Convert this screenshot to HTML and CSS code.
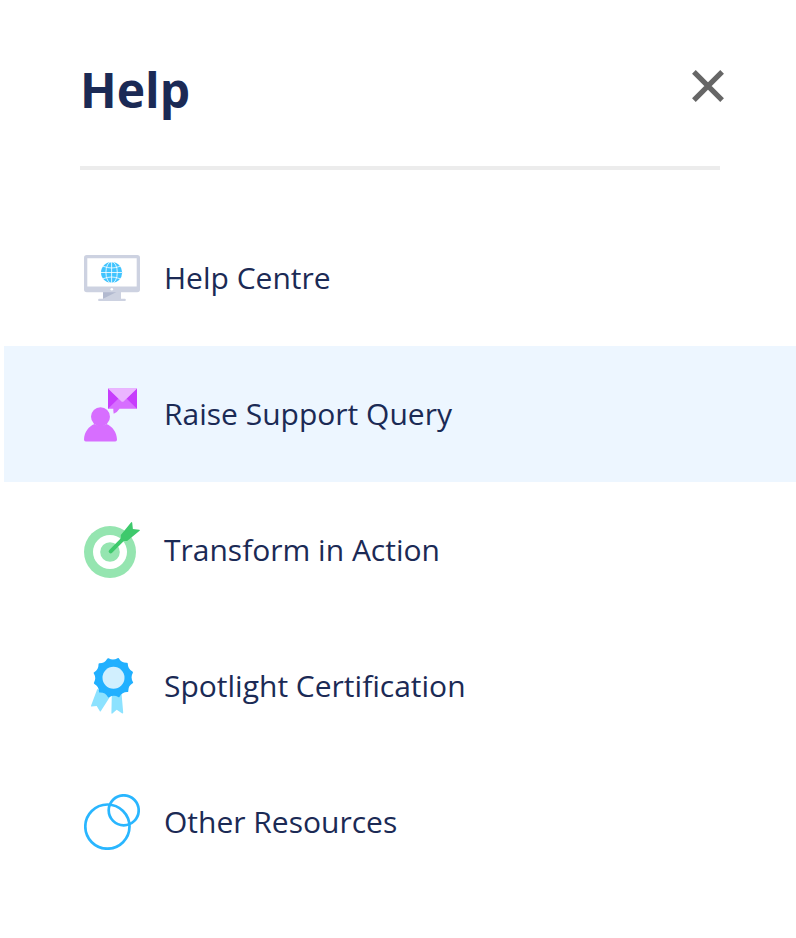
FILE: index.html
```
<!DOCTYPE html>
<html lang="en">
<head>
    <meta charset="utf-8">
    <title>Help</title>
    <link rel="stylesheet" href="styles.css">
</head>
<body>
    <aside class="help-panel">
        <header class="help-header">
            <h1>Help</h1>
            <button type="button" class="close-button" aria-label="Close">
                <svg viewBox="0 0 32 32" width="32" height="32">
                    <path fill="none" stroke="#666" stroke-width="5.200" d="M1.900 1.900 30.100 30.100M30.100 1.900 1.900 30.100"/>
                </svg>
            </button>
        </header>

        <nav class="help-menu">
            <a class="menu-item">
                <svg class="icon" viewBox="0 0 56 56">
                    <path fill="#cdd2e1" d="M19 41h18v8H19z"/>
                    <path fill="#b2b9cf" d="M19 42h13.500l-13.500 6.700z"/>
                    <path fill="#cdd2e1" d="M15 48.700h26q.6 0 .6.600v1.700H14.300v-1.700q0-.6.700-.6z"/>
                    <rect fill="#cdd2e1" y="5" width="56" height="37.300" rx="2.800"/>
                    <path fill="#fff" d="M3.300 8.200h49.400v28.200H3.300z"/>
                    <circle fill="#fff" cx="27.800" cy="39.300" r="1.300"/>
                    <circle fill="#40c4ff" cx="27.600" cy="22.500" r="10.600"/>
                    <g fill="none" stroke="#fff" stroke-width=".8">
                        <ellipse cx="27.600" cy="22.500" rx="5.700" ry="10.800"/>
                        <path d="M27.600 12v21M17 22.500h21.200M19 16.200q8.600 3.600 17.200 0M19 28.800q8.600-3.600 17.200 0"/>
                    </g>
                </svg>
                <span>Help Centre</span>
            </a>
            <a class="menu-item active">
                <svg class="icon" viewBox="0 0 56 56">
                    <circle fill="#d76eff" cx="16.500" cy="30.700" r="9.500"/>
                    <path fill="#d76eff" d="M0 53.500C.3 46 4.500 40.500 10.500 38q6 4 12 0C28.500 40.500 32.700 46 33 53.500q0 2-1.800 2H1.800Q0 55.500 0 53.500z"/>
                    <path fill="#d76eff" d="M24 2.500h29v20.300H35.500q-2 3.500-5.800 4.900-.5-2.200-.4-4.900H24z"/>
                    <path fill="#c73dfc" d="M24 2.500 34.500 12.500 24 22.800zM53 2.500 42.500 12.500 53 22.800z"/>
                    <path fill="#ebb5ff" d="M24 2.500h29L39.800 15.200q-1.300 1.100-2.600 0z"/>
                </svg>
                <span>Raise Support Query</span>
            </a>
            <a class="menu-item">
                <svg class="icon" viewBox="0 0 56 56">
                    <circle fill="#95e5b0" cx="26" cy="30" r="26"/>
                    <circle fill="#fff" cx="26" cy="30" r="17"/>
                    <circle fill="#95e5b0" cx="26" cy="30" r="9.800"/>
                    <path fill="none" stroke="#3ec96c" stroke-width="4" stroke-linecap="round" d="M26.700 29.300 41 15"/>
                    <path fill="#3ec96c" d="M36.800 12.900 47 .5q1-1 1.200.3l.7 6.300 6.400.6q1 .2.300 1L43.100 19.100H36.800z"/>
                </svg>
                <span>Transform in Action</span>
            </a>
            <a class="menu-item">
                <svg class="icon" viewBox="0 0 56 56">
                    <path fill="#8ce2ff" d="M13.300 31 7 47.700q-.2 1 .7.900l5-.7 3 5q.6 1 1.200 0L26.500 38zM27.800 37l-.4 18q.1 1.100 1 .4l4.300-3.600 5.200 3.400q1.300.6 1.300-.6L37.500 35z"/>
                    <path class="rosette" transform="translate(29.400 19.700)" d="M4.700-18.700Q7.600-13.700 13.400-13.900 13.400-8.100 18.500-5.300 15.700-.3 18.700 4.700 13.700 7.600 13.900 13.400 8.100 13.400 5.300 18.500.3 15.700-4.700 18.700-7.600 13.700-13.400 13.900-13.400 8.100-18.500 5.300-15.700 .3-18.700-4.700-13.700-7.600-13.900-13.400-8.100-13.400-5.300-18.500-.3-15.700 4.700-18.700z"/>
                    <circle fill="#d1effe" cx="29.500" cy="19.700" r="11"/>
                </svg>
                <span>Spotlight Certification</span>
            </a>
            <a class="menu-item">
                <svg class="icon" viewBox="0 0 56 56">
                    <g fill="none" stroke="#29b6ff" stroke-width="2.700">
                        <circle cx="23.400" cy="32.600" r="22.100"/>
                        <circle cx="39.700" cy="16.300" r="15"/>
                    </g>
                </svg>
                <span>Other Resources</span>
            </a>
        </nav>
    </aside>
</body>
</html>
```
FILE: styles.css
```
body {
    margin: 0;
    background: #fff;
    color: #1b2a55;
    font-family: "Open Sans", sans-serif;
}

.help-panel {
    padding-left: 4px;
}

.help-header {
    display: flex;
    justify-content: space-between;
    height: 170px;
    margin: 0 76px 40px;
    box-sizing: border-box;
    border-bottom: 4px solid #ececec;
}

.help-header h1 {
    margin: 57px 0 0;
    font-size: 48px;
    font-weight: 700;
    line-height: 66px;
}

.close-button {
    width: 32px;
    height: 32px;
    margin: 70px -4px 0 0;
    padding: 0;
    border: none;
    background: none;
    cursor: pointer;
}

.close-button svg {
    display: block;
}

.menu-item {
    display: flex;
    align-items: center;
    gap: 24px;
    height: 136px;
    padding-left: 80px;
    box-sizing: border-box;
    font-size: 30px;
    cursor: pointer;
}

.menu-item span {
    margin-bottom: 2px;
}

.menu-item.active {
    background: #edf6ff;
}

.icon {
    width: 56px;
    height: 56px;
    flex: none;
}

.rosette {
    fill: #21b0ff;
    stroke: #21b0ff;
    stroke-width: 2;
    stroke-linejoin: round;
}
```
